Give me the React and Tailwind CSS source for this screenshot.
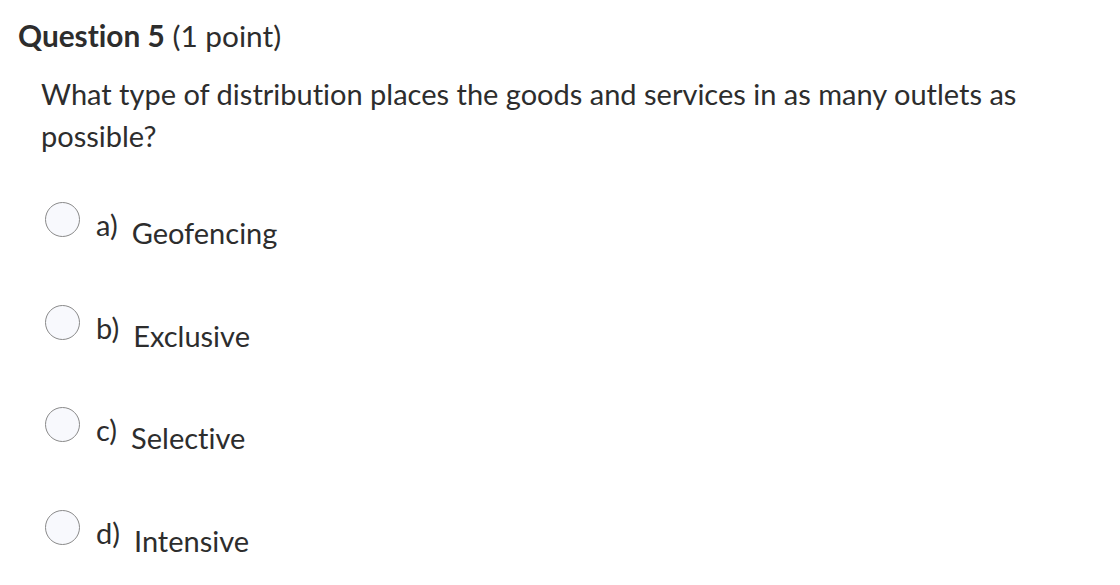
import React from 'react';

const options = [
  { letter: 'a)', text: 'Geofencing' },
  { letter: 'b)', text: 'Exclusive' },
  { letter: 'c)', text: 'Selective' },
  { letter: 'd)', text: 'Intensive' },
];

const App = () => {
  return (
    <div className="w-[1120px] h-[585px] bg-white text-[#2d2d2d] font-['Lato',sans-serif] [font-variant-ligatures:none] overflow-hidden">
      <h2 className="pl-[18px] pt-[18px] text-[29.8px] leading-[36px]">
        <span className="font-bold">Question 5</span> (1 point)
      </h2>
      <p className="pl-[41px] pr-[60px] mt-[19px] text-[29px] leading-[42px]">
        What type of distribution places the goods and services in as many outlets as possible?
      </p>
      <div className="mt-[45px] pl-[45px] flex flex-col gap-[67.67px]">
        {options.map((o) => (
          <div key={o.letter} className="flex items-start h-[35px] text-[29px] leading-[35px]">
            <span className="w-[35px] h-[35px] rounded-full border border-[#8a8a8a] bg-[#f8f9fd] shrink-0" />
            <span className="ml-[16px] mt-[5px]">{o.letter}</span>
            <span className="ml-[14px] mt-[13px]">{o.text}</span>
          </div>
        ))}
      </div>
    </div>
  );
};

export default App;
